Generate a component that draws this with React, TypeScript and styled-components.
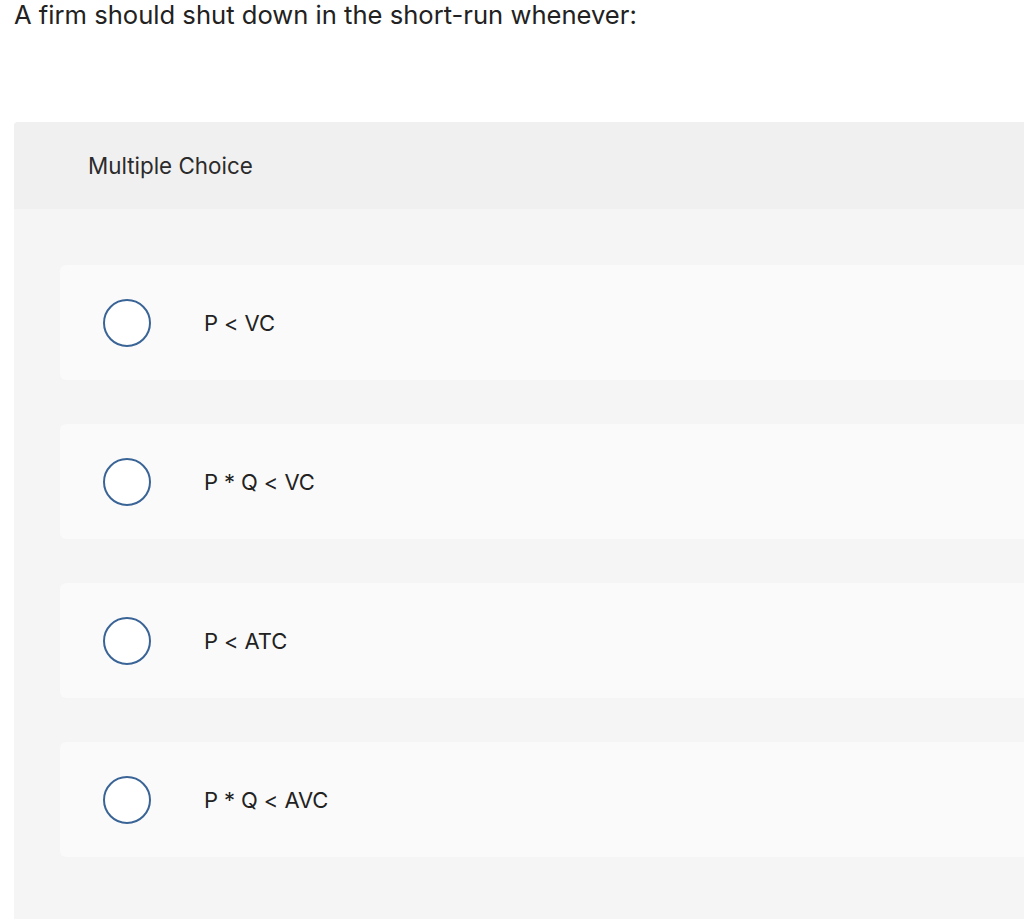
import React from "react";
import styled, { createGlobalStyle } from "styled-components";

const Global = createGlobalStyle`
  html, body { margin: 0; padding: 0; background: #ffffff; }
  body { font-family: "Inter", "Liberation Sans", sans-serif; color: #222; overflow: hidden; }
`;

const Page = styled.div`
  width: 1024px;
  height: 919px;
  overflow: hidden;
`;

const Question = styled.h1`
  margin: 0;
  padding: 0 0 0 14px;
  height: 32px;
  line-height: 30px;
  font-size: 25.6px;
  font-weight: 400;
  color: #222;
`;

const Panel = styled.section`
  margin: 90px 0 0 14px;
  width: 1030px;
  border-radius: 4px 0 0 0;
  overflow: hidden;
  background: #f5f5f5;
  height: 797px;
`;

const PanelHeader = styled.div`
  height: 87px;
  background: #f0f0f0;
  display: flex;
  align-items: center;
  padding-left: 74px;
  font-size: 22.4px;
  color: #2b2b2b;
`;

const Options = styled.div`
  display: flex;
  flex-direction: column;
  gap: 44px;
  padding: 56px 0 0 46px;
`;

const Option = styled.label`
  height: 115px;
  background: #fafafa;
  border-radius: 6px 0 0 6px;
  display: flex;
  align-items: center;
  padding-left: 43px;
  gap: 53px;
  cursor: pointer;
`;

const Radio = styled.span`
  width: 48px;
  height: 48px;
  box-sizing: border-box;
  border-radius: 50%;
  border: 2px solid #3a6496;
  background: #ffffff;
  flex: none;
`;

const OptionText = styled.span`
  font-size: 22px;
  color: #222;
  letter-spacing: -0.1px;
`;

const choices = ["P < VC", "P * Q < VC", "P < ATC", "P * Q < AVC"];

export default function App() {
  return (
    <Page>
      <Global />
      <Question>A firm should shut down in the short-run whenever:</Question>
      <Panel>
        <PanelHeader>Multiple Choice</PanelHeader>
        <Options>
          {choices.map((c) => (
            <Option key={c}>
              <Radio />
              <OptionText>{c}</OptionText>
            </Option>
          ))}
        </Options>
      </Panel>
    </Page>
  );
}
